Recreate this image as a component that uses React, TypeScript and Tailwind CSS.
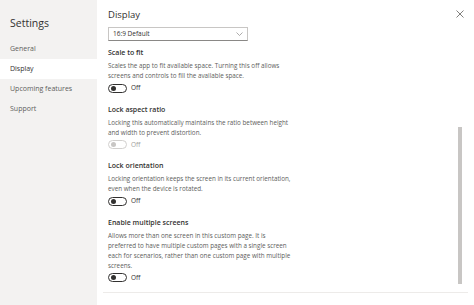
import React from "react"

const font = { fontFamily: '"Open Sans", "Noto Sans", sans-serif' }

const Toggle = ({ disabled = false }: { disabled?: boolean }) => (
  <div className="flex items-center gap-[4px] h-[10px]">
    <div
      className={
        disabled
          ? "w-[19px] h-[9px] rounded-full border border-[#d2d0ce] flex items-center pl-[2px]"
          : "w-[19px] h-[9px] rounded-full border border-[#323130] flex items-center pl-[2px]"
      }
    >
      <div
        className={
          disabled
            ? "w-[5px] h-[5px] rounded-full bg-[#c8c6c4]"
            : "w-[5px] h-[5px] rounded-full bg-[#323130]"
        }
      />
    </div>
    <span className={disabled ? "text-[6.5px] text-[#a19f9d]" : "text-[6.5px] text-[#323130]"}>Off</span>
  </div>
)

const Setting = ({
  title,
  lines,
  disabled,
}: {
  title: string
  lines: string[]
  disabled?: boolean
}) => (
  <div className="flex flex-col">
    <div className="text-[7px] leading-[10px] font-semibold text-[#323130]">{title}</div>
    <div className="mt-[3px] flex flex-col text-[6.3px] leading-[10px] text-[#605e5c] whitespace-nowrap">
      {lines.map((l) => (
        <span key={l}>{l}</span>
      ))}
    </div>
    <div className="mt-[2px]">
      <Toggle disabled={disabled} />
    </div>
  </div>
)

const navItems = ["General", "Display", "Upcoming features", "Support"]

export default function App() {
  return (
    <div className="flex w-[474px] h-[305px] bg-white overflow-hidden" style={font}>
      {/* Sidebar */}
      <aside className="w-[97px] shrink-0 bg-[#f3f2f1] flex flex-col pt-[15px]">
        <h1 className="pl-[10px] text-[10.5px] leading-[16px] text-[#323130]">Settings</h1>
        <nav className="mt-[8px] flex flex-col">
          {navItems.map((item) => (
            <div
              key={item}
              className={
                item === "Display"
                  ? "h-[20px] pl-[10px] flex items-center bg-white text-[7px] text-[#323130]"
                  : "h-[20px] pl-[10px] flex items-center text-[7px] text-[#605e5c]"
              }
            >
              {item}
            </div>
          ))}
        </nav>
      </aside>

      {/* Main panel */}
      <main className="flex-1 flex flex-col px-[6px]">
        <div className="flex items-start justify-between pl-[5px] pt-[8px]">
          <h2 className="text-[9.5px] leading-[14px] text-[#323130]">Display</h2>
          <svg width="8" height="8" viewBox="0 0 8 8" className="mt-[2px] mr-[4px]">
            <path d="M0.5 0.5 L7.5 7.5 M7.5 0.5 L0.5 7.5" stroke="#605e5c" strokeWidth="0.8" />
          </svg>
        </div>

        <div className="flex flex-1">
          <div className="flex-1 pl-[5px] pt-[5px] flex flex-col">
            {/* Dropdown */}
            <div className="w-[140px] h-[14px] border border-[#c8c6c4] border-b-[#8a8886] flex items-center justify-between px-[4px]">
              <span className="text-[6.5px] text-[#323130]">16:9 Default</span>
              <svg width="7" height="4" viewBox="0 0 7 4">
                <path d="M0.5 0.5 L3.5 3.5 L6.5 0.5" fill="none" stroke="#8a8886" strokeWidth="0.7" />
              </svg>
            </div>

            <div className="mt-[7px] flex flex-col gap-[11.5px]">
              <Setting
                title="Scale to fit"
                lines={[
                  "Scales the app to fit available space. Turning this off allows",
                  "screens and controls to fill the available space.",
                ]}
              />
              <Setting
                title="Lock aspect ratio"
                lines={[
                  "Locking this automatically maintains the ratio between height",
                  "and width to prevent distortion.",
                ]}
                disabled
              />
              <Setting
                title="Lock orientation"
                lines={[
                  "Locking orientation keeps the screen in its current orientation,",
                  "even when the device is rotated.",
                ]}
              />
              <Setting
                title="Enable multiple screens"
                lines={[
                  "Allows more than one screen in this custom page. It is",
                  "preferred to have multiple custom pages with a single screen",
                  "each for scenarios, rather than one custom page with multiple",
                  "screens.",
                ]}
              />
            </div>
          </div>

          {/* Scrollbar */}
          <div className="w-[4px] mr-[6px] flex flex-col pt-[105px] pb-[8px]">
            <div className="flex-1 bg-[#c8c6c4]" />
          </div>
        </div>

        <div className="h-[13px] border-t border-[#edebe9]" />
      </main>
    </div>
  )
}
